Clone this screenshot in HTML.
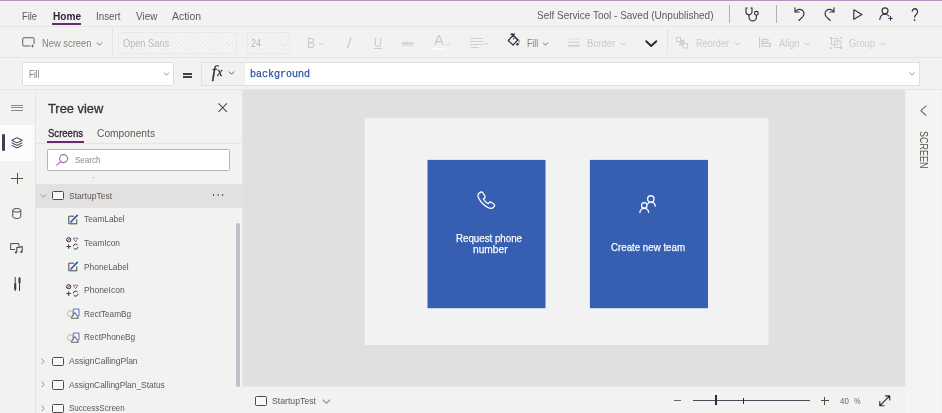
<!DOCTYPE html>
<html>
<head>
<meta charset="utf-8">
<title>Self Service Tool</title>
<style>
*{box-sizing:border-box;margin:0;padding:0}
html,body{width:942px;height:413px;overflow:hidden;background:#f2f2f1;font-family:"Liberation Sans","DejaVu Sans",sans-serif;color:#3b3a39}
#root{position:relative;width:942px;height:413px;overflow:hidden;background:#f2f2f1}
#root div,#root svg,#root span.t{position:absolute}
svg{overflow:visible}
.t{display:inline-block;white-space:nowrap;line-height:16px;transform-origin:0 50%}
.box{background:#fff;border:1px solid #e1dfdd}
.dot{background-image:radial-gradient(circle,#fff 0.55px,rgba(255,255,255,0) 0.9px),radial-gradient(circle,#fff 0.55px,rgba(255,255,255,0) 0.9px);background-size:4.8px 4.8px;background-position:0 0,2.4px 2.4px}
#tx{left:0;top:0;width:942px;height:413px;transform:translateZ(0)}

</style>
</head>
<body>
<div id="root">
<div style="left:0;top:0;width:942px;height:1px;background:#bd8fc0"></div>
<div style="left:0;top:26px;width:942px;height:1px;background:#e7e5e3"></div>
<div style="left:0;top:57px;width:942px;height:1px;background:#e5e3e1"></div>
<div style="left:0;top:89px;width:942px;height:1px;background:#e9e7e5"></div>

<!-- menu bar -->
<div style="left:52px;top:23px;width:29px;height:2px;background:#6b2a6e"></div>
<div style="left:728.5px;top:4.5px;width:1.3px;height:18px;background:#b3b1af"></div>
<div style="left:775.5px;top:4.5px;width:1.3px;height:18px;background:#b3b1af"></div>
<svg style="left:745px;top:6.5px" width="15" height="15" viewBox="0 0 15 15" fill="none" stroke="#372f46" stroke-width="1.15" stroke-linecap="round">
  <path d="M2.2 1H1v3.800a3 3 0 0 0 6 0V1H5.800"/>
  <path d="M4 7.800v2.400a3.700 3.700 0 0 0 7.400 0V8.200"/>
  <circle cx="11.400" cy="6.300" r="1.900"/>
</svg>
<svg style="left:794px;top:7px" width="11" height="14" viewBox="0 0 11 14" fill="none" stroke="#372f46" stroke-width="1.150" stroke-linecap="round" stroke-linejoin="round">
  <path d="M1 .8v4.200h4.200"/>
  <path d="M1.300 4.800C3 2.200 6.200 1.600 8.300 3.300c2.200 1.800 2.100 4.700.3 6.600L4.800 13.500"/>
</svg>
<svg style="left:823.500px;top:7px" width="11" height="14" viewBox="0 0 11 14" fill="none" stroke="#372f46" stroke-width="1.150" stroke-linecap="round" stroke-linejoin="round">
  <path d="M10 .8v4.200H5.800"/>
  <path d="M9.700 4.800C8 2.200 4.800 1.600 2.700 3.300.5 5.100.6 8 2.400 9.900l3.800 3.600"/>
</svg>
<svg style="left:853px;top:8.500px" width="10" height="11" viewBox="0 0 10 11" fill="none" stroke="#372f46" stroke-width="1.150" stroke-linejoin="round">
  <path d="M.8.700L9 5.500.8 10.300z"/>
</svg>
<svg style="left:879px;top:7px" width="14" height="14" viewBox="0 0 14 14" fill="none" stroke="#372f46" stroke-width="1.150" stroke-linecap="round">
  <circle cx="6" cy="3.800" r="3"/>
  <path d="M.8 12.500c.3-3 2.400-5.300 5.200-5.300 1.500 0 2.800.6 3.700 1.700"/>
  <path d="M11.500 9.500v3.800M9.600 11.400h3.800" stroke-width="1"/>
</svg>

<!-- toolbar -->
<svg style="left:22px;top:37px" width="13" height="11.700" viewBox="0 0 14 13" fill="none" stroke="#5f5c70" stroke-width="1.100" stroke-linejoin="round">
  <path d="M9 10H1.600a1 1 0 0 1-1-1V1.800a1 1 0 0 1 1-1h10.600a1 1 0 0 1 1 1v6"/>
  <path d="M11.500 8.500v3M10 10h3" stroke-width="1"/>
</svg>
<svg style="left:96px;top:42px" width="7" height="4" viewBox="0 0 8 5" fill="none" stroke="#6b6967" stroke-width="1.100"><path d="M.7.700L4 4 7.300.7"/></svg>
<div style="left:112px;top:27px;width:1px;height:30px;background:#e6e4e2"></div>
<div class="dot" style="left:118px;top:32px;width:118.500px;height:21.500px;background-color:#f2f1f0;border:1px solid #ebe9e7"></div>
<svg style="left:225px;top:41.500px" width="8" height="5" viewBox="0 0 8 5" fill="none" stroke="#e8e6e4" stroke-width="1"><path d="M.7.700L4 4 7.300.7"/></svg>
<div class="dot" style="left:247px;top:32px;width:43px;height:21.500px;background-color:#f2f1f0;border:1px solid #ebe9e7"></div>
<svg style="left:280px;top:41.500px" width="8" height="5" viewBox="0 0 8 5" fill="none" stroke="#e8e6e4" stroke-width="1"><path d="M.7.700L4 4 7.300.7"/></svg>
<svg style="left:317.500px;top:42px" width="6" height="3.500" viewBox="0 0 8 5" fill="none" stroke="#c6c4c2" stroke-width="1.200"><path d="M.7.700L4 4 7.300.7"/></svg>
<div style="left:374px;top:48.300px;width:8px;height:1px;background:#cfcdcb"></div>
<div style="left:431px;top:48.300px;width:15px;height:1.500px;background:#fbfaf9"></div>
<svg style="left:445px;top:42.500px" width="5.500" height="3.200" viewBox="0 0 8 5" fill="none" stroke="#c6c4c2" stroke-width="1.200"><path d="M.7.700L4 4 7.300.7"/></svg>
<svg style="left:470px;top:37.500px" width="13" height="10" viewBox="0 0 13 10" fill="none" stroke="#d2d0ce" stroke-width="1"><path d="M0 .5h13M0 3.500h13M0 6.500h13M0 9.500h9"/></svg>
<svg style="left:483px;top:42px" width="6" height="3.500" viewBox="0 0 8 5" fill="none" stroke="#c6c4c2" stroke-width="1.200"><path d="M.7.700L4 4 7.300.7"/></svg>
<svg style="left:507px;top:33px" width="14" height="14" viewBox="0 0 14 14" fill="none" stroke="#2f2b3a" stroke-width="1.200" stroke-linejoin="round" stroke-linecap="round">
  <path d="M7.600 3.200L12.200 7.600v2.200" stroke="#8f8d96" stroke-width="1.100"/>
  <path d="M1.300 7.500L5.800 2.300 10.800 7 6 12.200z"/>
  <path d="M4.100 1.300h3.200" stroke-width="1.500"/>
  <circle cx="6.600" cy="5.800" r=".7" fill="#2f2b3a" stroke="none"/>
  <circle cx="10.500" cy="11.300" r="1.200" fill="#2f2b3a" stroke="none"/>
</svg>
<svg style="left:542px;top:42px" width="7" height="4" viewBox="0 0 8 5" fill="none" stroke="#6b6967" stroke-width="1.100"><path d="M.7.700L4 4 7.300.7"/></svg>
<svg style="left:567.500px;top:38px" width="11.500" height="9" viewBox="0 0 12 9" fill="none" stroke="#d2d0ce"><path d="M0 .8h12" stroke-width="1" stroke-dasharray="1.5 1"/><path d="M0 4.200h12" stroke-width="1.200"/><path d="M0 7.900h12" stroke-width="1.900"/></svg>
<svg style="left:619.500px;top:42px" width="6.500" height="3.800" viewBox="0 0 8 5" fill="none" stroke="#c6c4c2" stroke-width="1.200"><path d="M.7.700L4 4 7.300.7"/></svg>
<svg style="left:645px;top:39.500px" width="12.500" height="7" viewBox="0 0 12.500 7" fill="none" stroke="#2c2838" stroke-width="1.900" stroke-linecap="round" stroke-linejoin="round"><path d="M1.200 1.200l5 4.800 5.100-4.800"/></svg>
<div style="left:667px;top:29px;width:1px;height:26px;background:#e7e5e3"></div>
<svg style="left:676px;top:37px" width="12" height="11.500" viewBox="0 0 12 11.500" stroke="#cfcdcb" stroke-width="1"><rect x="3.200" y="2.800" width="5.400" height="5.800" fill="#d6d4d2" stroke="none"/><rect x=".5" y=".5" width="4" height="4" fill="#f7f6f5"/><rect x="7.300" y="6.700" width="4.300" height="4.300" fill="#f7f6f5"/></svg>
<svg style="left:733.500px;top:42px" width="6.500" height="3.800" viewBox="0 0 8 5" fill="none" stroke="#c6c4c2" stroke-width="1.200"><path d="M.7.700L4 4 7.300.7"/></svg>
<svg style="left:759px;top:37px" width="12" height="11.500" viewBox="0 0 12 11.500" fill="none" stroke="#c8c6c4" stroke-width="1"><path d="M.6 0v11.500"/><rect x="3" y="2.300" width="6" height="2.400"/><rect x="3" y="6.500" width="8.500" height="2.800"/></svg>
<svg style="left:804px;top:42px" width="6.500" height="3.800" viewBox="0 0 8 5" fill="none" stroke="#c6c4c2" stroke-width="1.200"><path d="M.7.700L4 4 7.300.7"/></svg>
<svg style="left:829.500px;top:36.800px" width="12" height="12" viewBox="0 0 12 12" fill="none" stroke="#d2d0ce" stroke-width="1"><rect x="1.500" y="1.500" width="6.500" height="6.300"/><rect x="4.500" y="4" width="6.500" height="6.500"/><path d="M.2.800h1.300M10.500.8h1.300M.2 11.200h1.300M10.500 11.200h1.300" stroke="#a9a7b8" stroke-width="1.300"/></svg>
<svg style="left:880px;top:42px" width="6.500" height="3.800" viewBox="0 0 8 5" fill="none" stroke="#c6c4c2" stroke-width="1.200"><path d="M.7.700L4 4 7.300.7"/></svg>

<!-- formula bar -->
<div class="box" style="left:22px;top:62px;width:151.500px;height:23.500px;border-radius:1px"></div>
<svg style="left:163px;top:71.500px" width="7" height="4" viewBox="0 0 8 5" fill="none" stroke="#8a8886" stroke-width="1.100"><path d="M.7.700L4 4 7.300.7"/></svg>
<div style="left:183.200px;top:72.500px;width:8.800px;height:2px;background:#453f45"></div>
<div style="left:183.200px;top:76.300px;width:8.800px;height:2px;background:#453f45"></div>
<div style="left:201px;top:62px;width:44.500px;height:23.500px;background:#f2f2f1;border:1px solid #e1dfdd"></div>
<svg style="left:228.200px;top:71.200px" width="7" height="4" viewBox="0 0 8 5" fill="none" stroke="#4a4948" stroke-width="1.100"><path d="M.7.700L4 4 7.300.7"/></svg>
<div class="box" style="left:245px;top:62px;width:675px;height:23.500px;border-left:none"></div>
<svg style="left:909px;top:71.700px" width="6" height="3.800" viewBox="0 0 8 5" fill="none" stroke="#8a8886" stroke-width="1.200"><path d="M.7.700L4 4 7.300.7"/></svg>

<!-- left rail -->
<div style="left:35px;top:90px;width:1px;height:323px;background:#e7e5e3"></div>
<div style="left:10.500px;top:104.500px;width:12.500px;height:1px;background:#8a8886"></div>
<div style="left:10.500px;top:107.300px;width:12.500px;height:1px;background:#8a8886"></div>
<div style="left:10.500px;top:110px;width:12.500px;height:1px;background:#8a8886"></div>
<div style="left:0;top:125px;width:33.500px;height:35.500px;background:#fcfbfb"></div>
<div style="left:2px;top:134px;width:2.600px;height:17px;background:#4a3a50;border-radius:1.300px"></div>
<svg style="left:11px;top:137px" width="12" height="12" viewBox="0 0 12 12" fill="none" stroke="#372f46" stroke-width="1" stroke-linejoin="round">
  <path d="M6 .7l5.300 2.600L6 5.900.7 3.300z"/>
  <path d="M.7 5.800L6 8.400l5.300-2.600"/>
  <path d="M.7 8.300L6 10.900l5.300-2.600"/>
</svg>
<div style="left:11px;top:178px;width:12px;height:1px;background:#55524f"></div>
<div style="left:16.500px;top:172.500px;width:1px;height:11.500px;background:#55524f"></div>
<svg style="left:11.500px;top:208px" width="9.500" height="11" viewBox="0 0 9.500 11" fill="none" stroke="#4a4858" stroke-width="1">
  <ellipse cx="4.750" cy="2.300" rx="4" ry="1.800"/>
  <path d="M.75 2.300v6.400c0 1 1.800 1.800 4 1.800s4-.8 4-1.800V2.300"/>
</svg>
<svg style="left:10px;top:243px" width="13.500" height="11" viewBox="0 0 13.500 11" fill="none" stroke="#4a4858" stroke-width="1" stroke-linejoin="round"><path d="M5 6.500H.6V.6h8.300v2.600"/><path d="M6.800 9.300V4.600l5.400-1v5.200" stroke-width="1.100"/><circle cx="5.900" cy="9.400" r="1.100" fill="#4a4858" stroke="none"/><circle cx="11.300" cy="8.900" r="1.100" fill="#4a4858" stroke="none"/></svg>
<svg style="left:12.500px;top:276.800px" width="8.500" height="14" viewBox="0 0 8.500 14" fill="none" stroke="#3f3b45"><path d="M2.200 0v14M6.500 0v14" stroke-width="1"/><path d="M2.200 6.500v6" stroke-width="2.100"/><path d="M6.500 1v5" stroke-width="2.100"/></svg>

<!-- tree panel -->
<svg style="left:218.300px;top:103px" width="9.400" height="9.400" viewBox="0 0 10 10" fill="none" stroke="#4a4948" stroke-width="1.100"><path d="M.5.500l9 9M9.500.5l-9 9"/></svg>
<div style="left:47.200px;top:140.500px;width:36.700px;height:2px;background:#6b2a6e"></div>
<div style="left:36px;top:142.500px;width:206px;height:1px;background:#e7e5e3"></div>
<div class="box" style="left:47.200px;top:149.300px;width:182.600px;height:21.700px;border-color:#b9b4bb;border-radius:1.500px"></div>
<svg style="left:56.300px;top:153.800px" width="12.200" height="11.700" viewBox="0 0 12.200 11.700" fill="none" stroke="#a861ad" stroke-width="1.100" stroke-linecap="round"><circle cx="7.600" cy="4.600" r="4"/><path d="M4.700 7.600L.7 11.200"/></svg>
<div style="left:93px;top:176.500px;width:1px;height:1px;background:#a19f9d"></div>
<div style="left:36px;top:184px;width:206px;height:24px;background:#e2e1e0"></div>
<div style="left:236.300px;top:222.500px;width:3.600px;height:164.500px;background:#c1c1c8;border-radius:1.800px"></div>
<svg style="left:40px;top:193.500px" width="7" height="4" viewBox="0 0 8 5" fill="none" stroke="#8a8886" stroke-width="1.100"><path d="M.7.700L4 4 7.300.7"/></svg>
<div style="left:52.300px;top:191px;width:11.700px;height:9.300px;border:1px solid #4f4c4a;border-radius:1.500px;background:#f8f8f8"></div>
<div style="left:212.500px;top:194px;width:1.600px;height:1.600px;background:#3b3a39;border-radius:1px;box-shadow:4.600px 0 #3b3a39,9.200px 0 #3b3a39"></div>

<svg style="left:67.600px;top:213.700px" width="10.500" height="10.500" viewBox="0 0 10.500 10.500" fill="none" stroke-linejoin="round" stroke-linecap="round"><path d="M8.800 5.800V9.800H.8V2.200h5" stroke="#4a4745" stroke-width="1"/><path d="M3.300 7.500L9.300 1.300" stroke="#2f5bb7" stroke-width="1.700"/><path d="M2.700 8.300l.4-1.200.8.800z" fill="#2f5bb7" stroke="#2f5bb7" stroke-width=".5"/></svg>
<svg style="left:67.600px;top:261.000px" width="10.500" height="10.500" viewBox="0 0 10.500 10.500" fill="none" stroke-linejoin="round" stroke-linecap="round"><path d="M8.800 5.800V9.800H.8V2.200h5" stroke="#4a4745" stroke-width="1"/><path d="M3.300 7.500L9.300 1.300" stroke="#2f5bb7" stroke-width="1.700"/><path d="M2.700 8.300l.4-1.200.8.800z" fill="#2f5bb7" stroke="#2f5bb7" stroke-width=".5"/></svg>

<svg style="left:66.300px;top:237px" width="12.700" height="12.200" viewBox="0 0 12.700 12.200" fill="none" stroke-width="1"><circle cx="2.700" cy="2.700" r="2.100" stroke="#3b3a39"/><path d="M1.300 4.100L4.100 1.300" stroke="#3b3a39"/><path d="M7.200 1.200h4.800L9.600 4.800z" stroke="#b264b8" stroke-linejoin="round"/><path d="M2.700 7.300v4.600M.4 9.600H5" stroke="#3b3a39"/><path d="M7.300 9.300a2.400 2.400 0 0 1 4.300-1.200M12 10a2.400 2.400 0 0 1-4.300 1.200" stroke="#3b3a39"/></svg>
<svg style="left:66.300px;top:284.200px" width="12.700" height="12.200" viewBox="0 0 12.700 12.200" fill="none" stroke-width="1"><circle cx="2.700" cy="2.700" r="2.100" stroke="#3b3a39"/><path d="M1.300 4.100L4.100 1.300" stroke="#3b3a39"/><path d="M7.200 1.200h4.800L9.600 4.800z" stroke="#b264b8" stroke-linejoin="round"/><path d="M2.700 7.300v4.600M.4 9.600H5" stroke="#3b3a39"/><path d="M7.300 9.300a2.400 2.400 0 0 1 4.300-1.200M12 10a2.400 2.400 0 0 1-4.300 1.200" stroke="#3b3a39"/></svg>

<svg style="left:66.900px;top:308px" width="12.500" height="11" viewBox="0 0 12.500 11" fill="none" stroke-width="1" stroke-linejoin="round"><circle cx="3.300" cy="5.600" r="2.900" stroke="#b5b3b1"/><rect x="6.300" y="1" width="5.700" height="7" stroke="#3f6ac8" stroke-width=".9" fill="#f2f2f1"/><path d="M4.200 10.300l3.700-5.800 3.600 5.800z" stroke="#55524f" stroke-width=".9" fill="#f6f5f4"/></svg>
<svg style="left:66.900px;top:331.600px" width="12.500" height="11" viewBox="0 0 12.500 11" fill="none" stroke-width="1" stroke-linejoin="round"><circle cx="3.300" cy="5.600" r="2.900" stroke="#b5b3b1"/><rect x="6.300" y="1" width="5.700" height="7" stroke="#3f6ac8" stroke-width=".9" fill="#f2f2f1"/><path d="M4.200 10.300l3.700-5.800 3.600 5.800z" stroke="#55524f" stroke-width=".9" fill="#f6f5f4"/></svg>

<svg style="left:41.300px;top:357.500px" width="4" height="7" viewBox="0 0 5 8" fill="none" stroke="#8a8886" stroke-width="1.200"><path d="M.7.700L4 4 .7 7.300"/></svg>
<div style="left:52.300px;top:356.700px;width:11.700px;height:9.300px;border:1px solid #4f4c4a;border-radius:1.500px;background:#f8f8f8"></div>
<svg style="left:41.300px;top:381.100px" width="4" height="7" viewBox="0 0 5 8" fill="none" stroke="#8a8886" stroke-width="1.200"><path d="M.7.700L4 4 .7 7.300"/></svg>
<div style="left:52.300px;top:380.300px;width:11.700px;height:9.300px;border:1px solid #4f4c4a;border-radius:1.500px;background:#f8f8f8"></div>
<svg style="left:41.300px;top:404.700px" width="4" height="7" viewBox="0 0 5 8" fill="none" stroke="#8a8886" stroke-width="1.200"><path d="M.7.700L4 4 .7 7.300"/></svg>
<div style="left:52.300px;top:403.900px;width:11.700px;height:9.300px;border:1px solid #4f4c4a;border-radius:1.500px;background:#f8f8f8"></div>

<!-- canvas -->
<svg style="left:0;top:0" width="942" height="413" viewBox="0 0 942 413">
  <rect x="242.300" y="89.700" width="663.100" height="296.800" fill="#e0e0e0"/>
  <rect x="364.800" y="118.100" width="403.800" height="226.900" fill="#f2f2f2"/>
  <rect x="427.500" y="159.900" width="118" height="148.300" fill="#365eb1"/>
  <rect x="589.900" y="159.900" width="118.100" height="148.300" fill="#365eb1"/>
</svg>
<svg style="left:477px;top:191.200px" width="19.500" height="19" viewBox="0 0 19.500 19" fill="none" stroke="#fff" stroke-width="1.300" stroke-linejoin="round" stroke-linecap="round">
  <path d="M4.500 1C3.300 1 1 2.600 1 4.300c0 2 1.700 5.300 4.600 8.200 2.900 2.900 6.300 4.900 8.600 4.900 1.600 0 3.400-2 3.400-3.100 0-.6-.4-1.100-1-1.500l-2.500-1.500c-.7-.4-1.400-.3-1.900.3l-1 1.100C9.700 11.900 7.200 9.400 6.500 7.900l1.100-1c.6-.5.700-1.200.3-1.900L6.200 2.300C5.800 1.500 5.200 1 4.500 1z"/>
</svg>
<svg style="left:639px;top:195.300px" width="17.300" height="18" viewBox="0 0 19 19.700" fill="none" stroke="#fff" stroke-width="1.400" stroke-linecap="round">
  <circle cx="13" cy="4.300" r="3.500"/>
  <path d="M9.600 9.800c.8-1.200 2-1.900 3.400-1.900 2.600 0 4.500 1.700 4.900 4.300"/>
  <circle cx="5.800" cy="11.400" r="3"/>
  <path d="M1 19c.3-2.700 2.200-4.400 4.800-4.400s4.500 1.700 4.800 4.400"/>
</svg>

<!-- status bar -->
<div style="left:254.800px;top:396.300px;width:12.200px;height:9.300px;border:1px solid #4f4c4a;border-radius:1.500px;background:#f8f8f8"></div>
<svg style="left:322px;top:398.500px" width="8.700" height="5" viewBox="0 0 8.700 5" fill="none" stroke="#8a8886" stroke-width="1.100"><path d="M.6.600l3.750 3.700L8.100.6"/></svg>
<div style="left:673.800px;top:400px;width:7.400px;height:1px;background:#6b6967"></div>
<div style="left:692.600px;top:399.600px;width:117.400px;height:1.800px;background:#51475a"></div>
<div style="left:714.600px;top:395px;width:2.200px;height:9.500px;background:#33283c"></div>
<div style="left:742.600px;top:397.500px;width:1.400px;height:6.200px;background:#33283c"></div>
<div style="left:821px;top:400.200px;width:7.500px;height:1.100px;background:#4f4c4a"></div>
<div style="left:824.200px;top:397px;width:1.100px;height:7.500px;background:#4f4c4a"></div>
<svg style="left:878.500px;top:394.700px" width="11.500" height="11.500" viewBox="0 0 11.500 11.500" fill="none" stroke="#2c2838" stroke-width="1.150" stroke-linecap="round" stroke-linejoin="round"><path d="M1.200 10.300l9.100-9.100M6.500.8h4.200V5M5 10.700H.8V6.500"/></svg>

<!-- right panel -->
<div style="left:905.500px;top:90px;width:36.500px;height:323px;background:#f6f5f4;background-image:repeating-linear-gradient(90deg,#f7f6f5 0,#f7f6f5 1px,#f2f2f1 1px,#f2f2f1 2px)"></div>
<svg style="left:920.300px;top:105px" width="7" height="11.300" viewBox="0 0 7 11.300" fill="none" stroke="#6b6967" stroke-width="1.100"><path d="M6.300.6L.9 5.650l5.400 5.050"/></svg>

<div id="tx">
<div class="g" style="left:211.800px;top:62.700px;font-family:'Liberation Serif','DejaVu Serif',serif;font-style:italic;font-size:17px;line-height:18px;color:#372f3c;white-space:nowrap;-webkit-text-stroke:.3px #372f3c">f<span style="font-size:11.500px;margin-left:.6px;position:relative;top:-0.300px">x</span></div>
<div class="g" style="left:915px;top:131.400px;width:16px;height:36px;writing-mode:vertical-rl;font-size:10px;line-height:16px;color:#55524f;white-space:nowrap;transform-origin:50% 0;transform:scaleY(0.9)">SCREEN</div>
<span class="t" style="left:22.00px;top:8px;font-size:10.5px;color:#5d5a58;transform:scaleX(0.8864);">File</span>
<span class="t" style="left:52.50px;top:8px;font-size:10.5px;color:#2b2340;font-weight:bold;transform:scaleX(0.9593);">Home</span>
<span class="t" style="left:96.20px;top:8px;font-size:10.5px;color:#5d5a58;transform:scaleX(0.9328);">Insert</span>
<span class="t" style="left:136.20px;top:8px;font-size:10.5px;color:#5d5a58;transform:scaleX(0.9434);">View</span>
<span class="t" style="left:172.30px;top:8px;font-size:10.5px;color:#5d5a58;transform:scaleX(0.9936);">Action</span>
<span class="t" style="left:536.50px;top:7px;font-size:10.8px;color:#5f5c5a;transform:scaleX(0.9257);">Self Service Tool - Saved (Unpublished)</span>
<span class="t" style="left:910.60px;top:7px;font-size:18.5px;color:#372f46;transform:scaleX(0.7381);">?</span>
<span class="t" style="left:42.00px;top:36px;font-size:10.3px;color:#85827f;transform:scaleX(0.9103);">New screen</span>
<span class="t" style="left:122.50px;top:36px;font-size:10.3px;color:#bab8b6;transform:scaleX(0.8927);">Open Sans</span>
<span class="t" style="left:251.00px;top:36px;font-size:10.3px;color:#bab8b6;transform:scaleX(0.8719);">24</span>
<span class="t" style="left:306.50px;top:35px;font-size:14px;color:#cdcbc9;transform:scaleX(0.8562);">B</span>
<span class="t" style="left:346.50px;top:35px;font-size:14.5px;color:#cdcbc9;transform:scaleX(1.1411);">/</span>
<span class="t" style="left:374.00px;top:35px;font-size:12.5px;color:#cdcbc9;transform:scaleX(0.8858);">U</span>
<span class="t" style="left:402.30px;top:36px;font-size:7.5px;color:#cdcbc9;text-decoration:line-through;transform:scaleX(0.9509);">abc</span>
<span class="t" style="left:433.50px;top:32px;font-size:15.5px;color:#cdcbc9;transform:scaleX(0.9668);">A</span>
<span class="t" style="left:527.00px;top:36px;font-size:10.3px;color:#85827f;transform:scaleX(0.8513);">Fill</span>
<span class="t" style="left:587.00px;top:36px;font-size:10.3px;color:#cdcbc9;transform:scaleX(0.9060);">Border</span>
<span class="t" style="left:696.00px;top:36px;font-size:10.3px;color:#cdcbc9;transform:scaleX(0.8870);">Reorder</span>
<span class="t" style="left:779.00px;top:36px;font-size:10.3px;color:#cdcbc9;transform:scaleX(0.8950);">Align</span>
<span class="t" style="left:849.00px;top:36px;font-size:10.3px;color:#cdcbc9;transform:scaleX(0.9083);">Group</span>
<span class="t" style="left:28.80px;top:66px;font-size:10.8px;color:#807d7b;transform:scaleX(0.7538);">Fill</span>
<span class="t" style="left:249.60px;top:67px;font-size:10px;color:#2d55a4;font-family:'Liberation Mono','DejaVu Sans Mono',monospace;-webkit-text-stroke:0.25px #2d55a4;transform:scaleX(0.9997);">background</span>
<span class="t" style="left:47.80px;top:101px;font-size:13.4px;color:#3b3238;-webkit-text-stroke:0.35px #3b3238;transform:scaleX(0.9592);">Tree view</span>
<span class="t" style="left:47.80px;top:125px;font-size:11px;color:#33283c;-webkit-text-stroke:0.35px #33283c;transform:scaleX(0.8672);">Screens</span>
<span class="t" style="left:97.00px;top:125px;font-size:11px;color:#5d5a58;transform:scaleX(0.9299);">Components</span>
<span class="t" style="left:74.80px;top:152px;font-size:9.8px;color:#8a8886;transform:scaleX(0.8213);">Search</span>
<span class="t" style="left:69.20px;top:188px;font-size:9.8px;color:#5b5856;transform:scaleX(0.8676);">StartupTest</span>
<span class="t" style="left:84.30px;top:211px;font-size:9.8px;color:#5b5856;transform:scaleX(0.8490);">TeamLabel</span>
<span class="t" style="left:84.30px;top:235px;font-size:9.8px;color:#5b5856;transform:scaleX(0.8474);">TeamIcon</span>
<span class="t" style="left:84.30px;top:259px;font-size:9.8px;color:#5b5856;transform:scaleX(0.8545);">PhoneLabel</span>
<span class="t" style="left:84.30px;top:282px;font-size:9.8px;color:#5b5856;transform:scaleX(0.8686);">PhoneIcon</span>
<span class="t" style="left:84.30px;top:306px;font-size:9.8px;color:#5b5856;transform:scaleX(0.8397);">RectTeamBg</span>
<span class="t" style="left:84.30px;top:329px;font-size:9.8px;color:#5b5856;transform:scaleX(0.8467);">RectPhoneBg</span>
<span class="t" style="left:69.20px;top:353px;font-size:9.8px;color:#5b5856;transform:scaleX(0.8687);">AssignCallingPlan</span>
<span class="t" style="left:69.20px;top:377px;font-size:9.8px;color:#5b5856;transform:scaleX(0.8539);">AssignCallingPlan_Status</span>
<span class="t" style="left:69.20px;top:400px;font-size:9.8px;color:#5b5856;transform:scaleX(0.8196);">SuccessScreen</span>
<span class="t" style="left:456.20px;top:230px;font-size:10.8px;color:#fbfbf8;-webkit-text-stroke:0.25px #fbfbf8;transform:scaleX(0.9010);">Request phone</span>
<span class="t" style="left:472.70px;top:241px;font-size:10.8px;color:#fbfbf8;-webkit-text-stroke:0.25px #fbfbf8;transform:scaleX(0.9451);">number</span>
<span class="t" style="left:611.30px;top:239px;font-size:10.8px;color:#fbfbf8;-webkit-text-stroke:0.25px #fbfbf8;transform:scaleX(0.9000);">Create new team</span>
<span class="t" style="left:272.10px;top:393px;font-size:9.8px;color:#5b5856;transform:scaleX(0.8878);">StartupTest</span>
<span class="t" style="left:839.60px;top:393px;font-size:8.6px;color:#6b6866;transform:scaleX(0.9203);">40</span>
<span class="t" style="left:854.40px;top:393px;font-size:8.6px;color:#6b6866;transform:scaleX(0.8620);">%</span>
</div>
</div>
</body>
</html>
